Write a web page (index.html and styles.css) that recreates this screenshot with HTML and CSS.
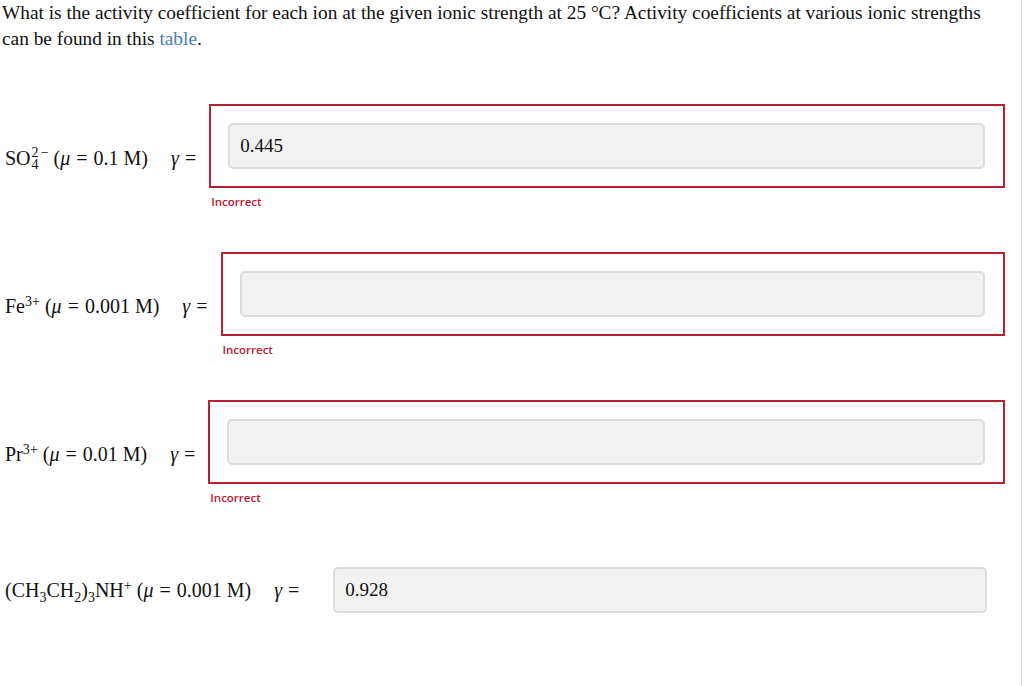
FILE: index.html
```html
<!DOCTYPE html>
<html>
<head>
<meta charset="utf-8">
<link rel="stylesheet" href="styles.css">
</head>
<body>
<div class="page">
  <p class="question">What is the activity coefficient for each ion at the given ionic strength at 25 °C? Activity coefficients at various ionic strengths can be found in this <a class="link" href="#">table</a>.</p>
  <div class="rows">
    <div class="row">
      <div class="label"><span class="chem">SO</span><span class="ss"><span class="sup">2<span class="thin"></span>−</span><span class="sub">4</span></span><span class="sp"></span>(<i>μ</i><span class="rel">=</span>0.1<span class="sp"></span>M)<span class="gap"></span><i>γ</i><span class="rel">=</span></div>
      <div class="answer">
        <div class="box wrong"><div class="field">0.445</div></div>
        <div class="feedback">Incorrect</div>
      </div>
    </div>
    <div class="row">
      <div class="label">Fe<sup class="up">3+</sup><span class="sp"></span>(<i>μ</i><span class="rel">=</span>0.001<span class="sp"></span>M)<span class="gap"></span><i>γ</i><span class="rel">=</span></div>
      <div class="answer">
        <div class="box wrong"><div class="field"></div></div>
        <div class="feedback">Incorrect</div>
      </div>
    </div>
    <div class="row">
      <div class="label">Pr<sup class="up">3+</sup><span class="sp"></span>(<i>μ</i><span class="rel">=</span>0.01<span class="sp"></span>M)<span class="gap"></span><i>γ</i><span class="rel">=</span></div>
      <div class="answer">
        <div class="box wrong"><div class="field"></div></div>
        <div class="feedback">Incorrect</div>
      </div>
    </div>
    <div class="row">
      <div class="label">(CH<sub class="down">3</sub>CH<sub class="down">2</sub>)<sub class="down">3</sub>NH<sup class="up">+</sup><span class="sp"></span>(<i>μ</i><span class="rel">=</span>0.001<span class="sp"></span>M)<span class="gap"></span><i>γ</i><span class="rel">=</span></div>
      <div class="answer">
        <div class="box plain"><div class="field">0.928</div></div>
      </div>
    </div>
  </div>
</div>
</body>
</html>
```
FILE: styles.css
```css
html, body {
  margin: 0;
  padding: 0;
  background: #ffffff;
}
.page {
  width: 1021px;
  min-height: 686px;
  border-right: 1px solid #e4e4e4;
  font-family: "Liberation Serif", "Times New Roman", serif;
  color: #111111;
}
.question {
  margin: 0 0 52px 0;
  padding-left: 2px;
  width: 1000px;
  font-size: 19.35px;
  line-height: 26px;
}
.link {
  color: #4a7cc2;
  text-decoration: none;
}
.rows {
  display: flex;
  flex-direction: column;
  gap: 40px;
}
.row {
  display: flex;
  align-items: center;
}
.label {
  padding-left: 5px;
  margin-right: 7px;
  white-space: nowrap;
  font-size: 20px;
  line-height: 24px;
}
.label i {
  font-style: italic;
}
.sp {
  display: inline-block;
  width: 0.25em;
}
.thin {
  display: inline-block;
  width: 0.15em;
}
.rel {
  display: inline-block;
  margin: 0 0.3em;
}
.gap {
  display: inline-block;
  width: 1.15em;
}
.ss {
  display: inline-flex;
  flex-direction: column;
  vertical-align: 8px;
  margin-left: 1px;
  font-size: 14px;
  line-height: 12px;
}
.sup, .sub {
  display: block;
}
.up {
  font-size: 14px;
  vertical-align: 7px;
  line-height: 0;
}
.down {
  font-size: 14px;
  vertical-align: -5px;
  line-height: 0;
}
.answer {
  flex: 1;
  margin-right: 16px;
}
.box {
  border: 2px solid #b7202e;
  padding: 17px 18px 17px 17px;
}
.box.plain {
  border-color: transparent;
  padding-left: 19px;
  padding-right: 16px;
}
.field {
  box-sizing: border-box;
  height: 46px;
  background: #f2f2f2;
  border: 2px solid #dddddd;
  border-radius: 5px;
  padding-left: 10px;
  font-size: 19px;
  line-height: 42px;
  color: #111111;
}
.feedback {
  margin-top: 4px;
  padding-left: 2px;
  height: 20px;
  font-family: "Open Sans", "Liberation Sans", sans-serif;
  font-weight: 600;
  font-size: 11.5px;
  line-height: 20px;
  color: #b7202e;
}
```
